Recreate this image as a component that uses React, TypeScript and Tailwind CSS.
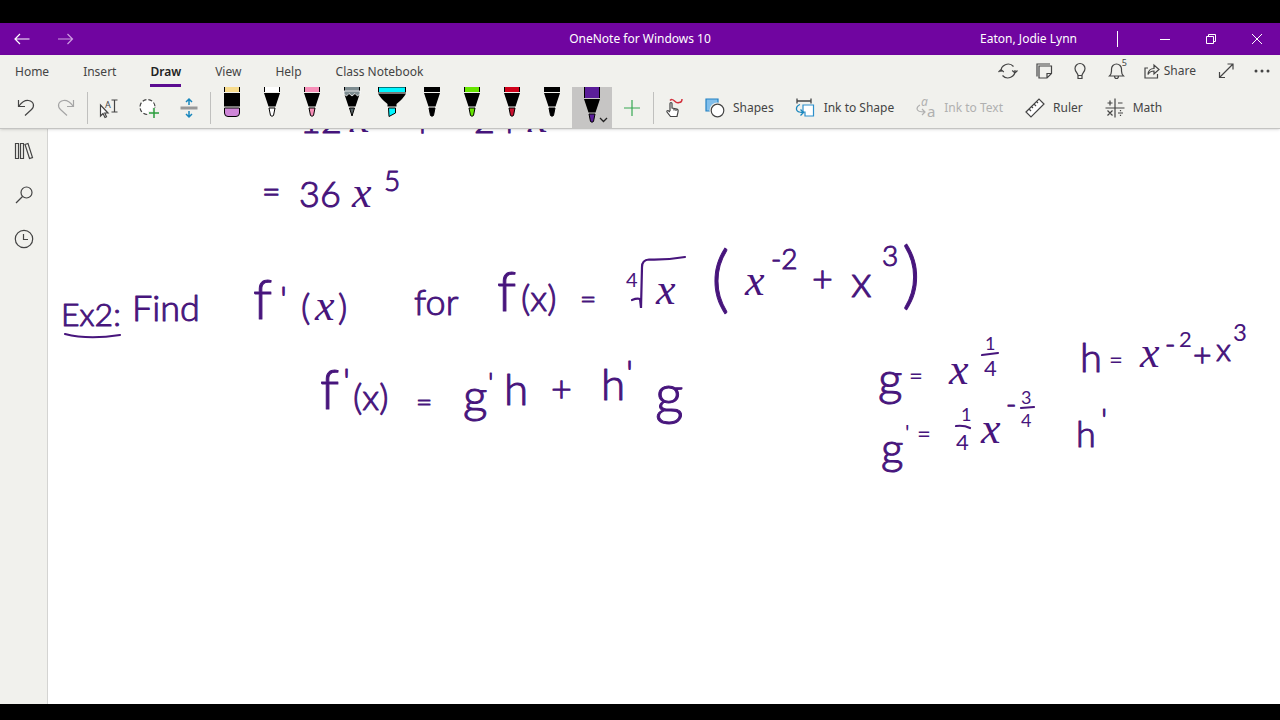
import { useState } from "react";
import type { ReactNode } from "react";
import clsx from "clsx";

const TABS = ["Home", "Insert", "Draw", "View", "Help", "Class Notebook"];

type Pen = { name: string; cap: string; tip: string; kind?: "eraser" | "pencil" | "marker" };

const PENS: Pen[] = [
  { name: "Eraser", cap: "#f8dc8c", tip: "#cf86d8", kind: "eraser" },
  { name: "White pen", cap: "#ffffff", tip: "#ffffff" },
  { name: "Pink pen", cap: "#f78fb8", tip: "#f78fb8" },
  { name: "Pencil", cap: "#7d8c90", tip: "#5b6568", kind: "pencil" },
  { name: "Cyan highlighter", cap: "#00f6ff", tip: "#00f6ff", kind: "marker" },
  { name: "Black pen", cap: "#000000", tip: "#000000" },
  { name: "Green pen", cap: "#66e600", tip: "#66e600" },
  { name: "Red pen", cap: "#d0021b", tip: "#c8102e" },
  { name: "Fine black pen", cap: "#000000", tip: "#000000" },
  { name: "Purple pen", cap: "#5b1e9a", tip: "#5b1e9a" },
];

type Ink = { t: string; x: number; y: number; s: number; curly?: boolean };

// x and y are window coordinates, y is the baseline
const INK: Ink[] = [
  { t: "12", x: 300, y: 133, s: 36 },
  { t: "x", x: 350, y: 132, s: 44, curly: true },
  { t: "+", x: 412, y: 137, s: 36 },
  { t: "24", x: 474, y: 133, s: 36 },
  { t: "x", x: 528, y: 132, s: 44, curly: true },

  { t: "=", x: 262, y: 203, s: 32 },
  { t: "36", x: 299, y: 207, s: 36 },
  { t: "x", x: 352, y: 207, s: 44, curly: true },
  { t: "5", x: 384, y: 191, s: 28 },

  { t: "Ex2:", x: 61, y: 326, s: 32 },
  { t: "Find", x: 132, y: 321, s: 36 },
  { t: "f", x: 253, y: 319, s: 56 },
  { t: "'", x: 280, y: 312, s: 36 },
  { t: "(", x: 301, y: 320, s: 36 },
  { t: "x", x: 315, y: 320, s: 44, curly: true },
  { t: ")", x: 338, y: 320, s: 36 },
  { t: "for", x: 414, y: 315, s: 36 },
  { t: "f", x: 497, y: 311, s: 56 },
  { t: "(x)", x: 521, y: 311, s: 36 },
  { t: "=", x: 580, y: 309, s: 28 },
  { t: "4", x: 626, y: 287, s: 20 },
  { t: "x", x: 656, y: 304, s: 44, curly: true },
  { t: "(", x: 711, y: 304, s: 72 },
  { t: "x", x: 745, y: 295, s: 44, curly: true },
  { t: "-2", x: 771, y: 269, s: 28 },
  { t: "+", x: 812, y: 292, s: 36 },
  { t: "x", x: 851, y: 297, s: 44 },
  { t: "3", x: 882, y: 266, s: 28 },
  { t: ")", x: 902, y: 300, s: 72 },

  { t: "f", x: 320, y: 409, s: 56 },
  { t: "'", x: 343, y: 394, s: 36 },
  { t: "(x)", x: 353, y: 410, s: 36 },
  { t: "=", x: 416, y: 412, s: 28 },
  { t: "g", x: 463, y: 413, s: 48 },
  { t: "'", x: 488, y: 393, s: 28 },
  { t: "h", x: 504, y: 405, s: 44 },
  { t: "+", x: 551, y: 402, s: 36 },
  { t: "h", x: 601, y: 400, s: 44 },
  { t: "'", x: 626, y: 386, s: 36 },
  { t: "g", x: 655, y: 414, s: 56 },

  { t: "g", x: 878, y: 396, s: 48 },
  { t: "=", x: 909, y: 384, s: 24 },
  { t: "x", x: 949, y: 384, s: 44, curly: true },
  { t: "1", x: 985, y: 350, s: 18 },
  { t: "4", x: 984, y: 376, s: 22 },
  { t: "h", x: 1080, y: 372, s: 40 },
  { t: "=", x: 1109, y: 368, s: 24 },
  { t: "x", x: 1140, y: 367, s: 44, curly: true },
  { t: "-", x: 1165, y: 354, s: 28 },
  { t: "2", x: 1179, y: 347, s: 22 },
  { t: "+", x: 1193, y: 366, s: 32 },
  { t: "x", x: 1216, y: 361, s: 32 },
  { t: "3", x: 1233, y: 341, s: 24 },

  { t: "g", x: 881, y: 464, s: 44 },
  { t: "'", x: 905, y: 440, s: 22 },
  { t: "=", x: 917, y: 442, s: 24 },
  { t: "1", x: 961, y: 421, s: 18 },
  { t: "4", x: 956, y: 450, s: 22 },
  { t: "x", x: 981, y: 443, s: 44, curly: true },
  { t: "-", x: 1006, y: 414, s: 28 },
  { t: "3", x: 1021, y: 404, s: 18 },
  { t: "4", x: 1021, y: 427, s: 18 },
  { t: "h", x: 1076, y: 447, s: 36 },
  { t: "'", x: 1101, y: 431, s: 32 },
];

// underline, root sign and fraction bars
const RULES = [
  "M65 334Q88 340 120 335",
  "M632 300Q637 298 640 299L641 308L642 267Q642 260 649 259.500Q667 260 685 257",
  "M982 355L998 353",
  "M956 426Q964 425 970 428",
  "M1021 408L1034 407",
];

function Svg({ size = 20, children, className }: { size?: number; children: ReactNode; className?: string }) {
  return (
    <svg
      width={size}
      height={size}
      viewBox={`0 0 ${size} ${size}`}
      fill="none"
      stroke="currentColor"
      strokeWidth="1.2"
      className={clsx("shrink-0 overflow-visible", className)}
      aria-hidden="true"
    >
      {children}
    </svg>
  );
}

function PenIcon({ pen, active }: { pen: Pen; active: boolean }) {
  const drop = active ? 6 : 0;
  return (
    <svg width="40" height="41" viewBox="0 0 40 41" aria-hidden="true">
      {pen.kind === "marker" ? (
        <>
          <path d="M6 0H34V5.500H6Z" fill="#000" />
          <path d="M7 .500H33V5H7Z" fill={pen.cap} />
          <path d="M6 6.500H34Q31 12 24.500 17V19.500H15.500V17Q9 12 6 6.500Z" fill="#000" />
          <path d="M16.500 21H23.500V26L17 29.500Z" fill={pen.tip} stroke="#000" />
        </>
      ) : pen.kind === "eraser" ? (
        <>
          <path d="M12 0H28V5H12Z" fill="#000" />
          <path d="M13 0H27V5H13Z" fill={pen.cap} />
          <path d="M12 6H28V19.500H12Z" fill="#000" />
          <path d="M12.500 21H27.500V26Q27.500 29.500 24 29.500H16Q12.500 29.500 12.500 26Z" fill={pen.tip} stroke="#000" />
        </>
      ) : (
        <>
          <path d={`M12 0H28V${5 + drop}H12Z`} fill="#000" />
          <path d={`M13 0H27V${5 + drop}H13Z`} fill={pen.cap} />
          <g transform={`translate(0 ${drop})`}>
            <path d="M12 6H28L23.500 19.500H16.500Z" fill="#000" />
            {pen.kind === "pencil" && (
              <path d="M12 4H28V7L25.500 9L23 6.500L20 9L17 6.500L14.500 9L12 7Z" fill={pen.cap} stroke="#fff" strokeWidth="0.800" />
            )}
            {pen.kind === "pencil" ? (
              <path d="M17.500 21H22.500L20 29Z" fill={pen.tip} stroke="#000" />
            ) : (
              <path d="M17 21H23L21.500 28.500Q20 30 18.500 28.500Z" fill={pen.tip} stroke="#000" />
            )}
          </g>
        </>
      )}
      {active && <path d="M28 31L31.500 34.500L35 31" fill="none" stroke="#222" strokeWidth="1.300" />}
    </svg>
  );
}

function ToolButton({
  label,
  children,
  className,
  onClick,
}: {
  label: string;
  children: ReactNode;
  className?: string;
  onClick?: () => void;
}) {
  return (
    <button
      aria-label={label}
      onClick={onClick}
      className={clsx("flex h-full w-10 shrink-0 items-center justify-center", className)}
    >
      {children}
    </button>
  );
}

function LabelButton({ label, children, disabled }: { label: string; children: ReactNode; disabled?: boolean }) {
  return (
    <button disabled={disabled} className={clsx("flex shrink-0 items-center gap-2 whitespace-nowrap", disabled && "text-[#b0b0b0]")}>
      {children}
      {label}
    </button>
  );
}

function Divider() {
  return <div className="mx-px h-8 w-px shrink-0 bg-[#c0c0be]" />;
}

function TitleBar() {
  return (
    <header className="grid h-8 grid-cols-[1fr_auto_1fr] items-center bg-[#7005a0] text-white">
      <div className="flex h-full items-center">
        <button aria-label="Back" className="flex h-full w-11 items-center justify-center">
          <Svg><path d="M17.500 10H3M8 5L3 10L8 15" /></Svg>
        </button>
        <button aria-label="Forward" className="flex h-full w-11 items-center justify-center text-[#cf9fe2]">
          <Svg><path d="M2 10H16.500M11.500 5L16.500 10L11.500 15" /></Svg>
        </button>
      </div>
      <h1>OneNote for Windows 10</h1>
      <div className="flex h-full items-center justify-end">
        <span>Eaton, Jodie Lynn</span>
        <div className="mr-6 ml-10 h-4 w-px bg-white" />
        <button aria-label="Minimize" className="flex h-full w-[46px] items-center justify-center">
          <Svg size={12}><path d="M1 6.500H11" strokeWidth="1" /></Svg>
        </button>
        <button aria-label="Restore" className="flex h-full w-[46px] items-center justify-center">
          <Svg size={12}><path d="M1.500 3.500H8.500V10.500H1.500ZM3.500 3.500V1.500H10.500V8.500H8.500" strokeWidth="1" /></Svg>
        </button>
        <button aria-label="Close" className="flex h-full w-[46px] items-center justify-center">
          <Svg size={12}><path d="M1 1L11 11M11 1L1 11" strokeWidth="1" /></Svg>
        </button>
      </div>
    </header>
  );
}

function Tabs() {
  const [tab, setTab] = useState("Draw");
  return (
    <div className="flex h-8 items-stretch justify-between">
      <nav className="flex gap-[34px] pl-[15px]">
        {TABS.map((name) => (
          <button
            key={name}
            onClick={() => setTab(name)}
            className={clsx(
              "border-b-3 pt-1 whitespace-nowrap",
              tab === name ? "border-[#5c0d91] font-semibold text-[#222]" : "border-transparent"
            )}
          >
            {name}
          </button>
        ))}
      </nav>
      <div className="flex items-center gap-4 pr-2">
        <button aria-label="Sync">
          <Svg>
            <path d="M3 11A7.200 7.200 0 0 1 15.500 5.500M17 9A7.200 7.200 0 0 1 4.500 14.500M0.500 11L3 8.500L5.800 11M14.200 9.500L17 12L19.500 9.500" />
          </Svg>
        </button>
        <button aria-label="Feed">
          <Svg>
            <path d="M5 5H17.500V12.500L13 17H5ZM13 17V12.500H17.500M3 15.500V3H16" />
          </Svg>
        </button>
        <button aria-label="Tell me">
          <Svg>
            <path d="M8 14.500C8 12 5 11 5 7.500A5 5 0 0 1 15 7.500C15 11 12 12 12 14.500ZM8 14.500V17.500H12V14.500" />
          </Svg>
        </button>
        <button aria-label="Notifications, 5" className="relative">
          <Svg>
            <path d="M3.500 15H17.500Q15.500 13 15.500 10V8A5 5 0 0 0 5.500 8V10Q5.500 13 3.500 15ZM8.500 15Q8.500 17.500 10.500 17.500T12.500 15" />
          </Svg>
          <span className="absolute -top-1 left-4 text-[9px] leading-3">5</span>
        </button>
        <button className="flex items-center gap-1 pl-0.5">
          <Svg size={16}>
            <path d="M4 5H1V15H13.500V11M4 11.500Q4.500 5.500 10 5.500V2L15 6.500L10 11V8Q6 8 4 11.500Z" />
          </Svg>
          Share
        </button>
        <button aria-label="Full screen" className="pl-1">
          <Svg>
            <path d="M3.500 16.500L17 3M11.500 3H17V8.500M3.500 11V16.500H9" />
          </Svg>
        </button>
        <button aria-label="More">
          <Svg>
            <g fill="currentColor" stroke="none">
              <circle cx="4" cy="10" r="1.500" />
              <circle cx="10" cy="10" r="1.500" />
              <circle cx="16" cy="10" r="1.500" />
            </g>
          </Svg>
        </button>
      </div>
    </div>
  );
}

function DrawTools() {
  const [active, setActive] = useState("Purple pen");
  return (
    <div className="flex h-[41px] items-center overflow-hidden">
      <ToolButton label="Undo" className="ml-[6px]">
        <Svg>
          <path d="M2.500 2V8.500H9M3 8C6 4 9 2 12.500 2.500C18.500 3.500 18.500 9 15.500 11.500L9 17.500" />
        </Svg>
      </ToolButton>
      <ToolButton label="Redo" className="text-[#a5a5a5]">
        <Svg>
          <path d="M17.500 2V8.500H11M17 8C14 4 11 2 7.500 2.500C1.500 3.500 1.500 9 4.500 11.500L11 17.500" />
        </Svg>
      </ToolButton>
      <Divider />
      <ToolButton label="Select objects or type text">
        <Svg>
          <path d="M1.500 7V18L4 15.500L6 19.500L7.500 18.700L5.800 15H9Z" fill="#fff" />
          <path d="M12.500 2H18.500M15.500 2V14M12.500 14H18.500" />
          <text x="6" y="10" fill="currentColor" stroke="none" fontSize="9">A</text>
        </Svg>
      </ToolButton>
      <ToolButton label="Lasso select">
        <Svg>
          <circle cx="8.500" cy="9" r="7.500" strokeDasharray="4 2" fill="#fff" />
          <path d="M9 15H20M15 9.500V20" stroke="#f1f1ed" strokeWidth="4" />
          <path d="M10 15H20M15 10V20" stroke="#2a9d3c" strokeWidth="1.500" />
        </Svg>
      </ToolButton>
      <ToolButton label="Insert space">
        <Svg>
          <path d="M1.500 8.500H18.500V11.500H1.500Z" fill="#999" stroke="none" />
          <path d="M10 7V1M7 4L10 1L13 4M10 13V19M7 16L10 19L13 16" stroke="#1886bd" strokeWidth="1.500" />
        </Svg>
      </ToolButton>
      <Divider />
      {PENS.map((pen) => (
        <ToolButton
          key={pen.name}
          label={pen.name}
          onClick={() => setActive(pen.name)}
          className={clsx(active === pen.name && "bg-[#c6c5c4]")}
        >
          <PenIcon pen={pen} active={active === pen.name} />
        </ToolButton>
      ))}
      <ToolButton label="Add pen">
        <Svg><path d="M2 10H18M10 2V18" stroke="#36a852" /></Svg>
      </ToolButton>
      <Divider />
      <ToolButton label="Draw with touch">
        <Svg>
          <path d="M5 13V5.500Q5 4.500 6 4.500T7 5.500V10L12 11Q13.500 11.500 13 14L12 18.500H5.500L2 14Q1.500 12.500 3 12.500L5 14M9 10.500V12.500M11 11V13" fill="#fff" />
          <path d="M5 2.500Q7 .500 9.500 3T14 4.500Q17 4.500 17 1" stroke="#d2303c" strokeWidth="1.500" />
        </Svg>
      </ToolButton>
      <div className="ml-[10px] flex items-center gap-[22px]">
        <LabelButton label="Shapes">
          <Svg>
            <path d="M1 1H13V13H1Z" fill="#82bfeb" stroke="#2381c4" />
            <circle cx="12.500" cy="12.500" r="8" fill="#f1f1ed" stroke="none" />
            <circle cx="12.500" cy="12.500" r="6.300" fill="#fff" />
          </Svg>
        </LabelButton>
        <LabelButton label="Ink to Shape">
          <Svg>
            <path d="M1 3H15M1 .500V5.500M15 .500V5.500" strokeWidth="1.300" />
            <path d="M7 7H17.500V18H9V14H7Z" fill="#fff" stroke="#2d8fcb" />
            <path d="M4 6.500Q0 8 .500 11.500Q1 14.500 7 14.500M4.500 11.500L7.500 14.500L4.500 17.500" stroke="#1886bd" strokeWidth="1.300" />
          </Svg>
        </LabelButton>
        <LabelButton label="Ink to Text" disabled>
          <Svg>
            <text x="5" y="8" fontSize="12" fontStyle="italic" fill="currentColor" stroke="none">a</text>
            <text x="11" y="19" fontSize="15" fill="currentColor" stroke="none">a</text>
            <path d="M4 7Q1 8.500 1 11Q1.500 14 9 14M6 11L9 14L6 17" />
          </Svg>
        </LabelButton>
        <LabelButton label="Ruler">
          <Svg>
            <path d="M1 14L14 1L19 6L6 19ZM4 11L6 13M6.500 8.500L8 10M9 6L11 8M11.500 3.500L13 5" fill="#fff" />
          </Svg>
        </LabelButton>
        <LabelButton label="Math">
          <Svg>
            <path d="M10 .500V19.500M.500 10H19.500M5 2.500V7.500M2.500 5H7.500M13 5H17.500M2.500 12.500L7.500 17.500M7.500 12.500L2.500 17.500M13 15H18M15.500 12V13.300M15.500 16.700V18" />
          </Svg>
        </LabelButton>
      </div>
    </div>
  );
}

function Sidebar() {
  return (
    <aside className="flex w-12 shrink-0 flex-col items-center border-r border-[#d4d4d2] bg-[#f1f1ed]">
      <button aria-label="Notebooks" className="flex h-11 w-full items-center justify-center">
        <Svg><path d="M1.500 2.500H4.500V17.500H1.500ZM6.500 2.500H9.500V17.500H6.500ZM11 3.500L14 2.500L18.500 16.500L15.500 17.500Z" /></Svg>
      </button>
      <button aria-label="Search" className="flex h-11 w-full items-center justify-center">
        <Svg><circle cx="12.500" cy="7.500" r="5.500" /><path d="M8.500 11.500L2 18" /></Svg>
      </button>
      <button aria-label="Recent notes" className="flex h-11 w-full items-center justify-center">
        <Svg><circle cx="10" cy="10" r="8.700" /><path d="M9.500 5V10.500H14" /></Svg>
      </button>
    </aside>
  );
}

function Page() {
  return (
    <main className="min-w-0 flex-1 overflow-hidden bg-white">
      <svg className="h-full w-full" role="group" aria-label="Ink notes">
        <g transform="translate(-48 -129)">
          {INK.map((k, i) => (
            <text
              key={i}
              x={k.x}
              y={k.y}
              fontSize={k.s}
              className={clsx(
                "fill-[#47157c]",
                k.curly ? "font-['Liberation_Serif',serif] italic" : "font-['Lato',sans-serif]",
                !k.curly && k.s >= 28 && "stroke-[#47157c] stroke-1 font-light [stroke-linejoin:round]"
              )}
            >
              {k.t}
            </text>
          ))}
          {RULES.map((d) => (
            <path key={d} d={d} fill="none" strokeWidth="2.200" strokeLinecap="round" className="stroke-[#47157c]" />
          ))}
        </g>
      </svg>
    </main>
  );
}

export default function App() {
  return (
    <div className="flex h-screen flex-col bg-black pt-[23px] pb-4 font-['Noto_Sans','Open_Sans',sans-serif] text-xs text-[#444]">
      <TitleBar />
      <div className="relative border-b border-[#c4c4c2] bg-[#f1f1ed] shadow-sm">
        <Tabs />
        <DrawTools />
      </div>
      <div className="flex min-h-0 flex-1">
        <Sidebar />
        <Page />
      </div>
    </div>
  );
}
